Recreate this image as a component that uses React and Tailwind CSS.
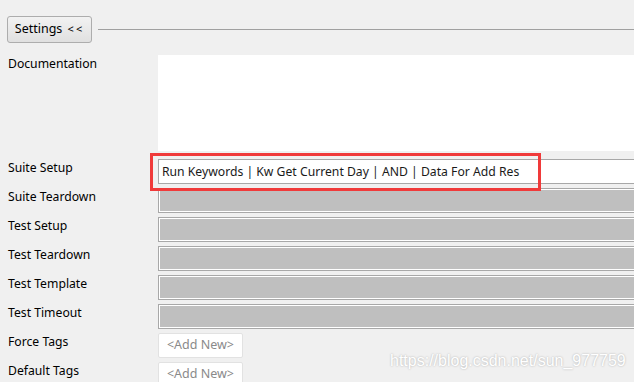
import React from "react";

const rows = ["Suite Teardown", "Test Setup", "Test Teardown", "Test Template", "Test Timeout"];

function Label({ children }) {
  return <div className="pl-[8px] pt-[1px] leading-[16px] text-black whitespace-nowrap">{children}</div>;
}

export default function App() {
  return (
    <div className="relative w-[634px] h-[382px] overflow-hidden bg-[#f0f0f0] font-['Noto_Sans',sans-serif] text-[12.2px]">
      {/* Header */}
      <div className="flex items-center pt-[16px] pl-[7px]">
        <button className="h-[27px] w-[85px] rounded-[3px] border border-[#adadad] bg-gradient-to-b from-[#f2f2f2] to-[#e0e0e0] text-[12.5px] text-black leading-none">
          Settings <span className="ml-[2px] text-[11px] tracking-[2px]">&lt;&lt;</span>
        </button>
        <div className="ml-[6px] h-px flex-1 bg-[#a0a0a0]" />
      </div>

      {/* Settings grid */}
      <div className="mt-[12px] grid grid-cols-[158px_1fr] items-start">
        <Label>Documentation</Label>
        <div className="h-[96px] bg-white" />

        <div className="col-span-2 h-[8px]" />

        <Label>Suite Setup</Label>
        <div className="relative h-[25px] w-[490px] border border-[#a8a8a8] bg-white">
          <div className="pl-[3px] leading-[23px] text-[#1a1a1a] whitespace-nowrap">
            Run Keywords | Kw Get Current Day | AND | Data For Add Res
          </div>
          <div className="absolute left-[-9px] top-[-7px] h-[38px] w-[391px] border-[3px] border-[#f03a3a]" />
        </div>

        {rows.map((r) => (
          <React.Fragment key={r}>
            <div className="col-span-2 h-[4px]" />
            <Label>{r}</Label>
            <div className="h-[25px] w-[490px] border border-[#a8a8a8] bg-[#bfbfbf] shadow-[inset_0_0_0_1px_#ffffff]" />
          </React.Fragment>
        ))}

        {["Force Tags", "Default Tags"].map((r) => (
          <React.Fragment key={r}>
            <div className="col-span-2 h-[4px]" />
            <Label>{r}</Label>
            <div className="flex h-[25px] w-[85px] items-center justify-center rounded-[2px] border border-[#e2e2e2] bg-white text-[12.5px] text-[#8a8a8a]">
              &lt;Add New&gt;
            </div>
          </React.Fragment>
        ))}
      </div>

      {/* watermark */}
      <div className="absolute left-[390px] top-[351px] font-['Liberation_Sans',sans-serif] text-[16px] leading-[20px] text-white [text-shadow:0_0_2px_#a8a8a8]">
        https://blog.csdn.net/sun_977759
      </div>
    </div>
  );
}
